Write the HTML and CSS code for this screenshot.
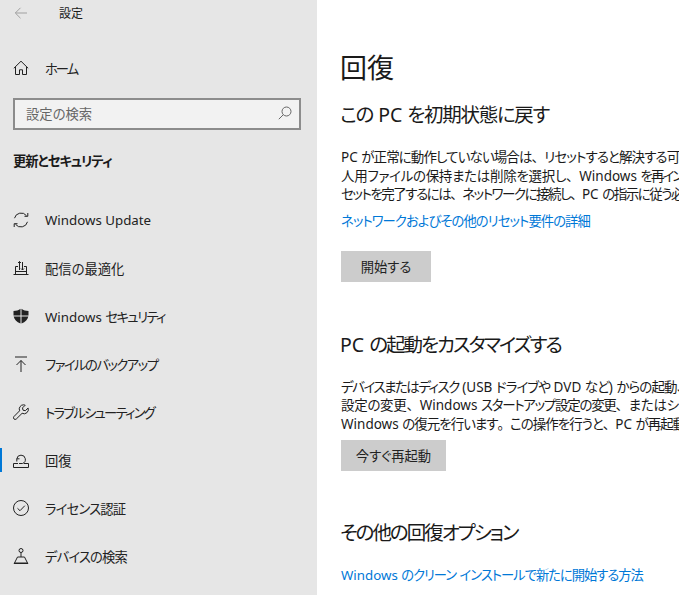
FILE: index.html
```html
<!DOCTYPE html>
<html lang="ja">
<head>
  <meta charset="UTF-8" />
  <title>設定</title>
  <link rel="stylesheet" href="styles.css">
</head>
<body>
  <div class="window">
    <aside class="sidebar">
      <div class="titlebar">
        <svg class="back" width="14" height="14" viewBox="0 0 14 14"><path d="M13 7H1.5M6.500 1.800L1.300 7l5.200 5.200" /></svg>
        <span class="app-title">設定</span>
      </div>

      <a class="nav-item home">
        <svg class="icon" viewBox="0 0 16 16"><path d="M.8 8.300L8 1.200l7.200 7.100M2.500 7v7.500h4V9.800h3v4.700h4V7" /></svg>
        <span class="sp-20">ホーム</span>
      </a>

      <div class="search">
        <span>設定の検索</span>
        <svg width="14" height="14" viewBox="0 0 14 14"><circle cx="8.500" cy="5.500" r="4.500" /><path d="M5.300 8.700L.8 13.200" /></svg>
      </div>

      <h3 class="group-title">更新とセキュリティ</h3>

      <nav class="nav-list">
        <a class="nav-item">
          <svg class="icon" viewBox="0 0 16 16"><path d="M1.500 6.200A6.800 6.800 0 0 1 13.500 3.700M14.800 1v3.300h-3.300M14.500 9.800A6.800 6.800 0 0 1 2.500 12.300M1.200 15v-3.300h3.300" /></svg>
          <span>Windows Update</span>
        </a>
        <a class="nav-item">
          <svg class="icon" viewBox="0 0 16 16"><path d="M.5 14.500h15M2.500 14.500v-8H5M13.500 14.500v-8H11M6.500 10V1.500M5 3l1.500-1.500L8 3M9.500 2v8M8 8.500l1.500 1.500 1.500-1.500M3 11.500h10" /></svg>
          <span>配信の最適化</span>
        </a>
        <a class="nav-item">
          <svg class="icon" viewBox="0 0 16 16"><path class="solid" d="M7.500.8C5.800 2.200 3 3 .5 3v4.500h7zM8.500.8C10.200 2.200 13 3 15.500 3v4.500h-7zM.7 8.500C1.200 11.500 3.500 13.800 7.500 15.600V8.500zM15.300 8.500C14.800 11.500 12.500 13.800 8.500 15.600V8.500z" /></svg>
          <span>Windows <span class="sp-15">セキュリティ</span></span>
        </a>
        <a class="nav-item">
          <svg class="icon" viewBox="0 0 16 16"><path d="M2 1h12M8 16V4.500M3.500 9L8 4.500 12.500 9" /></svg>
          <span class="sp-15">ファイルのバックアップ</span>
        </a>
        <a class="nav-item">
          <svg class="icon" viewBox="0 0 16 16"><path d="M10.500.8a4.300 4.300 0 0 0-3.900 6L.9 12.600a1.700 1.700 0 0 0 2.400 2.400l5.800-5.700a4.300 4.300 0 0 0 6-5.300l-2.800 2.700-2.300-.5-.5-2.300 2.700-2.700a4.300 4.300 0 0 0-1.700-.4z" /></svg>
          <span class="sp-17">トラブルシューティング</span>
        </a>
        <a class="nav-item active">
          <svg class="icon" viewBox="0 0 16 16"><path d="M.5 15.500h15v-4h-4.500M.5 15.500v-4H5M3.800 9.500V6.800h2.700M3.800 6.800A4.300 4.300 0 1 1 9.500 11.500H6" /></svg>
          <span>回復</span>
        </a>
        <a class="nav-item">
          <svg class="icon" viewBox="0 0 16 16"><circle cx="8" cy="8" r="7.500" /><path d="M4.500 8.300l2.500 2.400 4.800-5" /></svg>
          <span class="sp-08">ライセンス認証</span>
        </a>
        <a class="nav-item">
          <svg class="icon" viewBox="0 0 16 16"><circle cx="8" cy="2.500" r="2" /><path d="M8 4.500V9M4.500 9h7l3 6H1.500zM.8 15.500h14.400" /></svg>
          <span class="sp-08">デバイスの検索</span>
        </a>
      </nav>
    </aside>

    <main class="content">
      <h1>回復</h1>

      <section class="first">
        <h2 class="sp-13">この<span class="en"> PC </span>を初期状態に戻す</h2>
        <div class="desc">
          <div class="line sp-09"><span class="en">PC </span>が正常に動作していない場合は<span class="fw">、</span>リセットすると解決する可能性があります。</div>
          <div class="line sp-03">人用ファイルの保持または削除を選択し<span class="fw">、</span><span class="en">Windows </span><span class="sp-20">を再インストールします。</span></div>
          <div class="line sp-15">セットを完了するには<span class="fw">、</span>ネットワークに接続し<span class="fw">、</span><span class="en">PC </span>の指示に従う必要があります。</div>
        </div>
        <a class="link sp-09">ネットワークおよびその他のリセット要件の詳細</a>
        <button class="btn start">開始する</button>
      </section>

      <section class="second">
        <h2 class="sp-20"><span class="en">PC </span>の起動をカスタマイズする</h2>
        <div class="desc">
          <div class="line sp-09"><span class="sp-15">デバイスまたはディスク</span><span class="en"> (USB </span>ドライブや<span class="en"> DVD </span>など<span class="en">) </span>からの起動<span class="fw">、</span>Windows のファームウェア</div>
          <div class="line sp-03">設定の変更<span class="fw">、</span><span class="en">Windows </span><span class="sp-13">スタートアップ設定の変更</span><span class="fw">、</span>またはシステム イメージからの</div>
          <div class="line sp-10"><span class="en">Windows </span>の復元を行います<span class="fw">。</span>この操作を行うと<span class="fw">、</span><span class="en">PC </span>が再起動します。</div>
        </div>
        <button class="btn restart">今すぐ再起動</button>
      </section>

      <section class="third">
        <h2 class="sp-20">その他の回復オプション</h2>
        <a class="link sp-10"><span class="en">Windows </span>のクリーン<span class="en"> </span>インストールで新たに開始する方法</a>
      </section>
    </main>
  </div>
</body>
</html>
```

FILE: styles.css
```css
* {
  box-sizing: border-box;
}
html, body {
  margin: 0;
  height: 100%;
  overflow: hidden;
}
body {
  font-family: "Noto Sans", "Noto Sans CJK JP", sans-serif;
  font-feature-settings: "palt";
  font-size: 13.3px;
  color: #1a1a1a;
  background: #fff;
}
.window {
  display: flex;
  height: 595px;
}
svg path, svg circle {
  fill: none;
  stroke: currentColor;
  stroke-width: 1;
}
svg path.solid {
  fill: currentColor;
  stroke: none;
}

/* letter spacing for the narrow kana runs */
.sp-03 { letter-spacing: -0.3px; }
.sp-08 { letter-spacing: -0.8px; }
.sp-09 { letter-spacing: -0.9px; }
.sp-10 { letter-spacing: -1px; }
.sp-13 { letter-spacing: -1.3px; }
.sp-15 { letter-spacing: -1.5px; }
.sp-17 { letter-spacing: -1.7px; }
.sp-20 { letter-spacing: -2px; }
.en { letter-spacing: 0; }
.fw { font-feature-settings: normal; }

/* sidebar */
.sidebar {
  width: 317px;
  flex: none;
  background: #e6e6e6;
}
.titlebar {
  display: flex;
  align-items: center;
  height: 25px;
  padding-left: 14px;
  font-size: 12px;
}
.back {
  color: #a0a0a0;
  margin-right: 31px;
}
.nav-item {
  display: flex;
  align-items: center;
  height: 48px;
  padding-left: 13px;
  position: relative;
  color: #222;
  white-space: nowrap;
}
.nav-item .icon {
  width: 16px;
  height: 16px;
  margin-right: 16px;
  flex: none;
}
.home {
  margin-top: 19px;
}
.search {
  display: flex;
  align-items: center;
  justify-content: space-between;
  width: 288px;
  height: 32px;
  margin: 6px 0 0 13px;
  padding: 0 7px 2px 11px;
  background: #f2f2f2;
  border: 2px solid #8c8c8c;
  color: #666;
}
.group-title {
  margin: 19px 0 0 13px;
  font-size: 13.3px;
  font-weight: 700;
  line-height: 24px;
  letter-spacing: -1px;
}
.nav-list {
  margin-top: 23px;
}
.nav-item.active::before {
  content: "";
  position: absolute;
  left: 0;
  top: 12px;
  width: 2px;
  height: 24px;
  background: #0078d7;
}

/* content */
.content {
  flex: 1;
  min-width: 0;
  padding: 46px 0 0 24px;
  overflow: hidden;
}
h1 {
  margin: 0 0 0 -1px;
  font-size: 27px;
  font-weight: 400;
  line-height: 44px;
}
h2 {
  margin: 0 0 0 -1px;
  font-size: 19.5px;
  font-weight: 400;
  line-height: 28px;
}
.first {
  margin-top: 11px;
}
.second {
  margin-top: 49px;
}
.third {
  margin-top: 48px;
}
.desc {
  margin-top: 19px;
  font-size: 13.5px;
}
.line {
  line-height: 18.5px;
  white-space: nowrap;
}
.link {
  display: block;
  margin-top: 7px;
  line-height: 20px;
  color: #0078d7;
  white-space: nowrap;
}
.btn {
  display: block;
  height: 31px;
  padding: 0;
  border: none;
  background: #ccc;
  color: #222;
  font: inherit;
  font-feature-settings: inherit;
}
.start {
  width: 90px;
  margin-top: 20px;
}
.restart {
  width: 105px;
  margin-top: 7px;
}
.third .link {
  margin-top: 18px;
}
```
